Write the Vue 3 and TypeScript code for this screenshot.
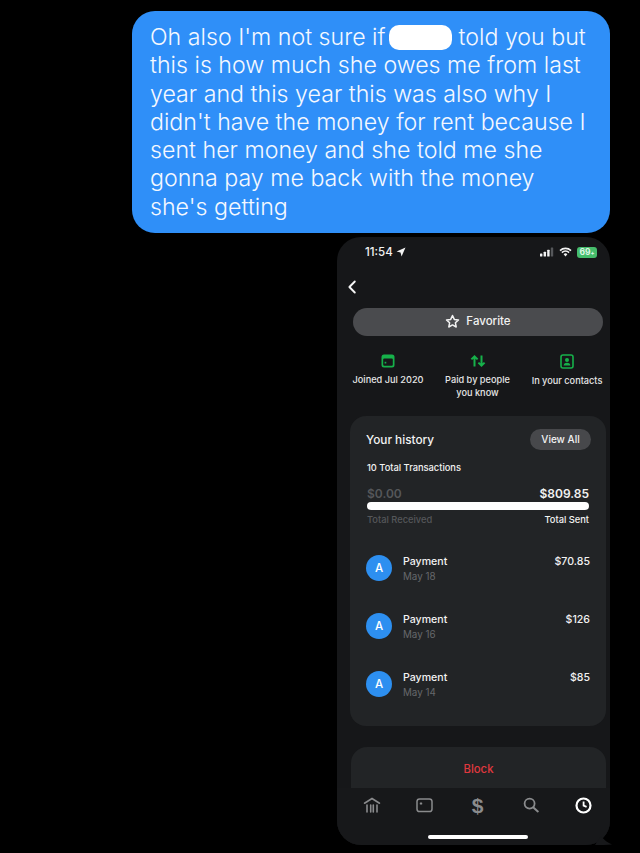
<script setup lang="ts">
interface Payment {
  name: string
  date: string
  amount: string
}

const messageLines = [
  'this is how much she owes me from last',
  'year and this year this was also why I',
  "didn't have the money for rent because I",
  'sent her money and she told me she',
  'gonna pay me back with the money',
  "she's getting"
]

const badges = [
  { icon: 'calendar', lines: ['Joined Jul 2020'] },
  { icon: 'arrows', lines: ['Paid by people', 'you know'] },
  { icon: 'contact', lines: ['In your contacts'] }
]

const payments: Payment[] = [
  { name: 'Payment', date: 'May 18', amount: '$70.85' },
  { name: 'Payment', date: 'May 16', amount: '$126' },
  { name: 'Payment', date: 'May 14', amount: '$85' }
]
</script>

<template>
  <div class="page">
    <!-- message bubble -->
    <div class="bubble">
      <div class="first-line">
        <span>Oh also I'm not sure if</span>
        <span class="redacted"></span>
        <span>told you but</span>
      </div>
      <div v-for="line in messageLines" :key="line">{{ line }}</div>
    </div>

    <!-- screenshot sent as a message -->
    <div class="phone-wrap">
      <div class="phone">
        <div class="status">
          <div class="time">
            11:54
            <svg width="10" height="10" viewBox="0 0 10 10"><path d="M9.5.5 5.6 9.4 4.5 5.5.6 4.4z" fill="#f2f2f2" /></svg>
          </div>
          <div class="status-right">
            <svg width="14" height="10" viewBox="0 0 14 10">
              <rect x="0" y="6.5" width="2.4" height="3" rx=".5" fill="#f2f2f2" />
              <rect x="3.6" y="4.8" width="2.4" height="4.7" rx=".5" fill="#f2f2f2" />
              <rect x="7.2" y="2.8" width="2.4" height="6.7" rx=".5" fill="#f2f2f2" />
              <rect x="10.8" y=".5" width="2.4" height="9" rx=".5" fill="#55575a" />
            </svg>
            <svg width="13" height="10" viewBox="0 0 13 10">
              <path d="M1 3.6a8 8 0 0 1 11 0M2.9 5.6a5.2 5.2 0 0 1 7.2 0" fill="none" stroke="#f2f2f2" stroke-width="1.6" />
              <path d="M4.6 7.3a2.7 2.7 0 0 1 3.8 0L6.5 9.4z" fill="#f2f2f2" />
            </svg>
            <div class="battery">69<span class="bolt">+</span></div>
          </div>
        </div>

        <div class="back-row">
          <svg width="10" height="14" viewBox="0 0 10 14"><path d="M7.8 1.5 2.4 7l5.4 5.5" fill="none" stroke="#f4f4f4" stroke-width="1.9" stroke-linecap="round" stroke-linejoin="round" /></svg>
        </div>

        <div class="favorite">
          <svg width="15" height="15" viewBox="0 0 15 15"><path d="m7.5 1.5 1.8 3.9 4.2.5-3.1 2.9.8 4.2-3.7-2.1-3.7 2.1.8-4.2L1.5 5.9l4.2-.5z" fill="none" stroke="#f2f2f2" stroke-width="1.5" stroke-linejoin="round" /></svg>
          <span>Favorite</span>
        </div>

        <div class="badges">
          <div v-for="badge in badges" :key="badge.icon" class="badge">
            <svg v-if="badge.icon === 'calendar'" width="14" height="14" viewBox="0 0 14 14">
              <rect x=".5" y=".5" width="13" height="13" rx="2.5" fill="#16b14a" />
              <rect x="2.2" y="4.5" width="9.6" height="7.3" rx="1" fill="#161719" />
              <rect x="3.6" y="7.8" width="1.7" height="1.7" fill="#16b14a" />
            </svg>
            <svg v-else-if="badge.icon === 'arrows'" width="16" height="14" viewBox="0 0 16 14">
              <path d="M4.5 12.5V2.5M1.4 5.4l3.1-3.1 3.1 3.1M11.5 1.5v10M8.4 8.6l3.1 3.1 3.1-3.1" fill="none" stroke="#16b14a" stroke-width="2" />
            </svg>
            <svg v-else width="14" height="15" viewBox="0 0 14 15">
              <rect x="1" y="1" width="12" height="13" rx="2" fill="none" stroke="#16b14a" stroke-width="1.6" />
              <circle cx="7" cy="6" r="2" fill="#16b14a" />
              <path d="M3.6 11.4c.3-1.9 1.6-2.6 3.4-2.6s3.1.7 3.4 2.6z" fill="#16b14a" />
            </svg>
            <div class="badge-text">
              <div v-for="line in badge.lines" :key="line">{{ line }}</div>
            </div>
          </div>
        </div>

        <div class="card history">
          <div class="history-head">
            <span class="history-title">Your history</span>
            <span class="view-all">View All</span>
          </div>
          <div class="total-count">10 Total Transactions</div>
          <div class="totals">
            <span class="muted">$0.00</span>
            <span>$809.85</span>
          </div>
          <div class="bar"></div>
          <div class="total-labels">
            <span class="muted">Total Received</span>
            <span>Total Sent</span>
          </div>
          <div class="rows">
            <div v-for="p in payments" :key="p.date" class="row">
              <div class="avatar">A</div>
              <div class="row-info">
                <div class="row-name">{{ p.name }}</div>
                <div class="row-date">{{ p.date }}</div>
              </div>
              <div class="row-amount">{{ p.amount }}</div>
            </div>
          </div>
        </div>

        <div class="card block">Block</div>

        <div class="tabbar">
          <div class="tabs">
            <svg width="18" height="17" viewBox="0 0 18 17">
              <path d="M1.5 6.2 9 1.5l7.5 4.7" fill="none" stroke="#8a8b8d" stroke-width="1.6" stroke-linecap="round" />
              <path d="M4 8v7M7.7 8v7M10.3 8v7M14 8v7" stroke="#8a8b8d" stroke-width="1.6" stroke-linecap="round" />
            </svg>
            <svg width="17" height="15" viewBox="0 0 17 15">
              <rect x="1" y="1" width="15" height="12.6" rx="2.6" fill="none" stroke="#8a8b8d" stroke-width="1.5" />
              <rect x="3.8" y="4.4" width="2.4" height="2.2" rx=".5" fill="#8a8b8d" />
            </svg>
            <div class="dollar">$</div>
            <svg width="16" height="16" viewBox="0 0 16 16">
              <circle cx="6.6" cy="6.6" r="5" fill="none" stroke="#8a8b8d" stroke-width="1.8" />
              <path d="m10.4 10.4 4.4 4" stroke="#8a8b8d" stroke-width="2" stroke-linecap="round" />
            </svg>
            <svg width="17" height="17" viewBox="0 0 17 17">
              <circle cx="8.5" cy="8.5" r="7" fill="none" stroke="#fff" stroke-width="2.2" />
              <path d="M8.6 4.5v4.2l3 1.2" fill="none" stroke="#fff" stroke-width="1.8" />
            </svg>
          </div>
          <div class="home-indicator"></div>
        </div>
      </div>
      <svg class="tail" width="22" height="9" viewBox="0 0 22 9"><path d="M6 0c3 4 7 7 11 8.5-5 .5-11 .5-17 .5z" fill="#17181a" /></svg>
    </div>
  </div>
</template>

<style>
html,
body {
  background: #000;
}
</style>

<style scoped>
.page {
  width: 640px;
  height: 853px;
  box-sizing: border-box;
  padding: 11px 30px 0 0;
  display: flex;
  flex-direction: column;
  align-items: flex-end;
  background: #000;
  overflow: hidden;
  font-family: Inter, "Liberation Sans", sans-serif;
}

.bubble {
  width: 478px;
  height: 222px;
  box-sizing: border-box;
  padding: 12px 18px 0;
  background: #2f8ff8;
  border-radius: 23px;
  color: #f4f8ff;
  font-family: Inter, "Liberation Sans", sans-serif;
  font-size: 23.2px;
  font-weight: 300;
  line-height: 28.3px;
  white-space: nowrap;
}

.first-line {
  display: flex;
  align-items: center;
}

.redacted {
  width: 63px;
  height: 25px;
  margin: 0 7px 0 3px;
  background: #fff;
  border-radius: 10px;
}

.phone-wrap {
  position: relative;
  margin-top: 4px;
}

.phone {
  width: 273px;
  height: 608px;
  display: flex;
  flex-direction: column;
  background: #161719;
  border-radius: 24px;
  overflow: hidden;
  color: #f2f2f2;
}

.tail {
  position: absolute;
  right: -7px;
  bottom: 0;
}

.status {
  height: 30px;
  flex-shrink: 0;
  box-sizing: border-box;
  padding: 0 13px 0 28px;
  display: flex;
  align-items: center;
  justify-content: space-between;
}

.time {
  display: flex;
  align-items: center;
  gap: 3px;
  font-size: 11.5px;
  font-weight: 500;
}

.status-right {
  display: flex;
  align-items: center;
  gap: 5px;
}

.battery {
  width: 20px;
  height: 11px;
  border-radius: 3px;
  background: #46bd6c;
  color: #dff5e6;
  font-size: 8.5px;
  font-weight: 700;
  line-height: 11px;
  text-align: center;
}

.bolt {
  font-size: 6px;
}

.back-row {
  height: 41px;
  flex-shrink: 0;
  box-sizing: border-box;
  padding: 11px 0 0 10px;
}

.favorite {
  height: 28px;
  flex-shrink: 0;
  margin: 0 7px 0 16px;
  padding-bottom: 2px;
  box-sizing: border-box;
  display: flex;
  align-items: center;
  justify-content: center;
  gap: 6px;
  background: #4a4b4e;
  border-radius: 14px;
  font-size: 11.5px;
  font-weight: 500;
}

.badges {
  height: 80px;
  flex-shrink: 0;
  box-sizing: border-box;
  padding: 18px 0 0 7px;
  display: grid;
  grid-template-columns: 88px 91px 88px;
}

.badge {
  display: flex;
  flex-direction: column;
  align-items: center;
  gap: 5px;
}

.badge-text {
  font-size: 9.2px;
  font-weight: 500;
  line-height: 13px;
  text-align: center;
  white-space: nowrap;
  color: #e6e6e6;
}

.card {
  flex-shrink: 0;
  margin: 0 4px 0 13px;
  background: #222426;
  border-radius: 16px;
}

.history {
  height: 310px;
  box-sizing: border-box;
  padding: 13px 16px 0 16px;
}

.history-head {
  height: 21px;
  display: flex;
  align-items: center;
  justify-content: space-between;
}

.history-title {
  font-size: 11.8px;
  font-weight: 500;
}

.view-all {
  width: 61px;
  height: 21px;
  margin-right: -1px;
  background: #47484b;
  border-radius: 11px;
  font-size: 10px;
  font-weight: 500;
  line-height: 21px;
  text-align: center;
}

.total-count {
  margin-top: 11px;
  margin-left: 1px;
  font-size: 9.3px;
  font-weight: 500;
  line-height: 14px;
}

.totals {
  margin: 10px 1px 0;
  display: flex;
  justify-content: space-between;
  font-size: 12px;
  font-weight: 600;
  line-height: 17px;
}

.bar {
  height: 8px;
  margin: 0 1px;
  border-radius: 4px;
  background: #fff;
}

.total-labels {
  margin: 4px 1px 0;
  display: flex;
  justify-content: space-between;
  font-size: 9.3px;
  font-weight: 500;
  line-height: 12px;
}

.muted {
  color: #55575a;
}

.rows {
  margin-top: 20px;
}

.row {
  height: 58px;
  display: flex;
  align-items: flex-start;
}

.avatar {
  width: 26px;
  height: 26px;
  margin-top: 9px;
  flex-shrink: 0;
  border-radius: 50%;
  background: #2d8ff0;
  color: #fff;
  font-size: 11.5px;
  font-weight: 500;
  line-height: 26px;
  text-align: center;
}

.row-info {
  flex: 1;
  margin-left: 11px;
  padding-top: 8.5px;
}

.row-name,
.row-amount {
  font-size: 10.6px;
  font-weight: 500;
  line-height: 14px;
}

.row-amount {
  padding-top: 8.5px;
}

.row-name {
  margin-bottom: 0.5px;
}

.row-date {
  font-size: 9.8px;
  line-height: 15px;
  color: #66686b;
}

.block {
  height: 60px;
  margin-top: 21px;
  margin-left: 14px;
  padding-top: 14px;
  box-sizing: border-box;
  color: #e0383e;
  font-size: 11.3px;
  font-weight: 500;
  line-height: 16px;
  text-align: center;
}

.tabbar {
  position: relative;
  height: 57px;
  margin-top: -19px;
  flex-shrink: 0;
  background: #17181a;
}

.tabs {
  height: 34px;
  box-sizing: border-box;
  padding: 0 0 0 8px;
  display: grid;
  grid-template-columns: repeat(5, 53px);
  align-items: center;
  justify-items: center;
}

.dollar {
  color: #8a8b8d;
  font-family: "Liberation Sans", sans-serif;
  font-size: 21px;
  font-weight: 700;
  line-height: 21px;
}

.home-indicator {
  width: 100px;
  height: 4px;
  margin: 13px 0 0 91px;
  border-radius: 2px;
  background: #fff;
}
</style>
